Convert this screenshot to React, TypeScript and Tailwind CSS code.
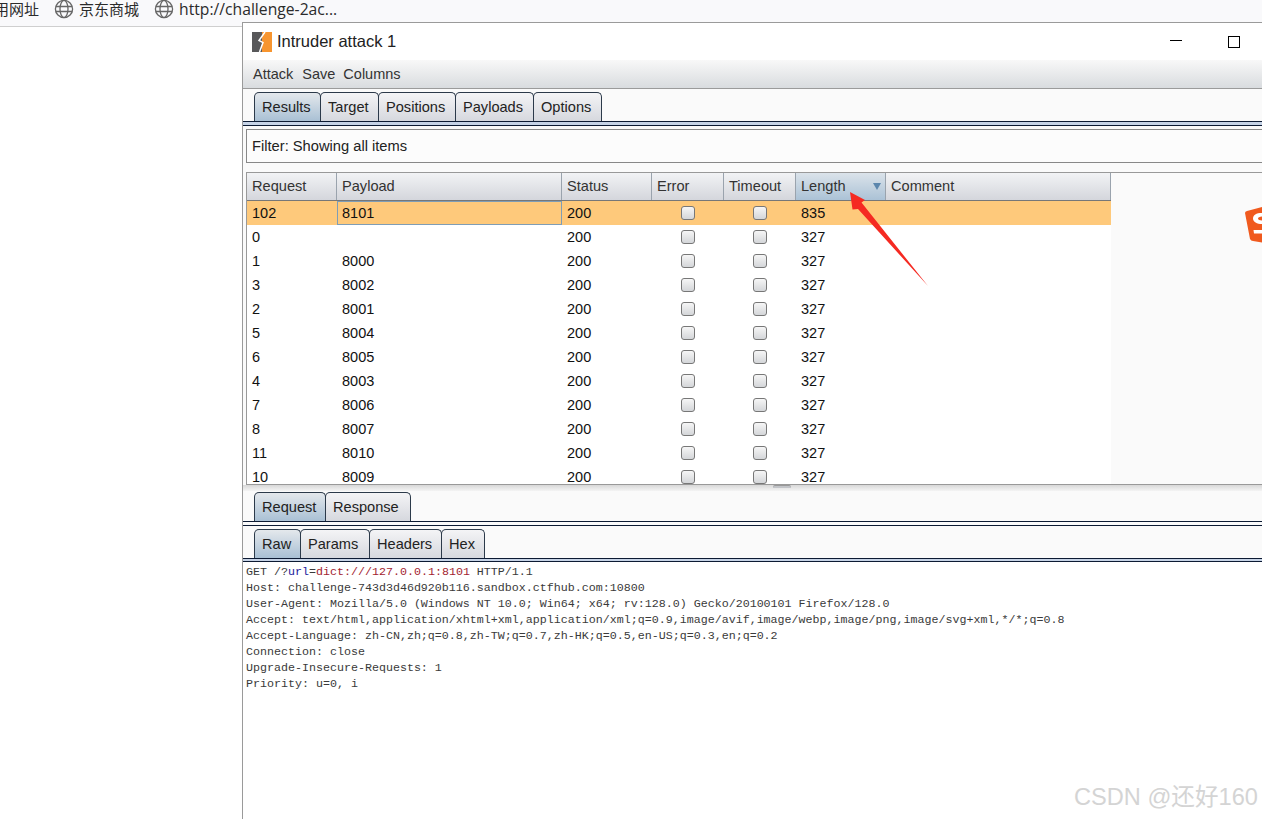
const sans = "font-['Liberation_Sans',Arial,sans-serif]";

const rows = [
  ["102", "8101", "835"],
  ["0", "", "327"],
  ["1", "8000", "327"],
  ["3", "8002", "327"],
  ["2", "8001", "327"],
  ["5", "8004", "327"],
  ["6", "8005", "327"],
  ["4", "8003", "327"],
  ["7", "8006", "327"],
  ["8", "8007", "327"],
  ["11", "8010", "327"],
  ["10", "8009", "327"],
];

const headers = [
  { label: "Request", w: "w-[90px]" },
  { label: "Payload", w: "w-[225px]" },
  { label: "Status", w: "w-[90px]" },
  { label: "Error", w: "w-[72px]" },
  { label: "Timeout", w: "w-[72px]" },
  { label: "Length", w: "w-[90px]" },
  { label: "Comment", w: "w-[225px]" },
];

function Globe() {
  return (
    <svg width="20" height="20" viewBox="0 0 20 20" fill="none" stroke="#666" strokeWidth="1.3" className="shrink-0">
      <circle cx="10" cy="10" r="8.6" />
      <ellipse cx="10" cy="10" rx="4" ry="8.6" />
      <path d="M1.6 7.5h16.8M1.6 12.5h16.8" />
    </svg>
  );
}

function Tab({ label, active, w }: { label: string; active?: boolean; w: string }) {
  return (
    <div
      className={`${w} h-full -mr-px flex items-center pl-[7px] pt-[2px] rounded-t-[5px] border border-b-0 border-[#2c3a4a] text-[14.6px] text-[#222] ${
        active ? "bg-gradient-to-b from-[#e4e8ec] to-[#a9c0d4]" : "bg-gradient-to-b from-[#f4f4f6] to-[#d6d8de]"
      }`}
    >
      {label}
    </div>
  );
}

function TabRow({ tabs, h }: { tabs: { label: string; w: string; active?: boolean }[]; h: string }) {
  return (
    <div className={`${h} flex pl-[11px]`}>
      {tabs.map((t) => (
        <Tab key={t.label} {...t} />
      ))}
    </div>
  );
}

function Check() {
  return (
    <div className="w-[14px] h-[14px] rounded-[3px] border border-[#777] bg-gradient-to-b from-[#f6f6f6] to-[#d4d6d9]" />
  );
}

function HttpRequest() {
  return (
    <pre className="font-['Liberation_Mono',monospace] text-[11.67px] leading-[16px] text-[#3a3a3a] pl-[3px] pt-[2px]">
      {"GET /?"}
      <span className="text-[#1c1c9c]">url</span>
      {"="}
      <span className="text-[#a3232f]">dict:///127.0.0.1:8101</span>
      {" HTTP/1.1\n"}
      {"Host: challenge-743d3d46d920b116.sandbox.ctfhub.com:10800\n"}
      {"User-Agent: Mozilla/5.0 (Windows NT 10.0; Win64; x64; rv:128.0) Gecko/20100101 Firefox/128.0\n"}
      {"Accept: text/html,application/xhtml+xml,application/xml;q=0.9,image/avif,image/webp,image/png,image/svg+xml,*/*;q=0.8\n"}
      {"Accept-Language: zh-CN,zh;q=0.8,zh-TW;q=0.7,zh-HK;q=0.5,en-US;q=0.3,en;q=0.2\n"}
      {"Connection: close\n"}
      {"Upgrade-Insecure-Requests: 1\n"}
      {"Priority: u=0, i"}
    </pre>
  );
}

export default function App() {
  return (
    <div className={`relative w-[1262px] h-[819px] overflow-hidden bg-white ${sans}`}>
      {/* browser bookmarks bar */}
      <div className="h-[27px] bg-[#f9f9fb] border-b border-[#cfcfcf] flex items-center pb-[8px] text-[#2b2b2b]">
        <span className="ml-[-6px] text-[15px] leading-[18px] font-['Noto_Sans_CJK_SC',sans-serif]">用网址</span>
        <div className="ml-[15px] flex items-center gap-[5px]">
          <Globe />
          <span className="text-[15px] leading-[18px] font-['Noto_Sans_CJK_SC',sans-serif]">京东商城</span>
        </div>
        <div className="ml-[15px] flex items-center gap-[5px]">
          <Globe />
          <span className="text-[15.7px] leading-[18px] font-['Open_Sans',sans-serif]">http://challenge-2ac...</span>
        </div>
      </div>

      {/* intruder window */}
      <div className="absolute left-[242px] top-[22px] w-[1020px] h-[797px] bg-[#fafafa] border-l border-t border-[#9a9a9a] flex flex-col">
        <div className="h-[37px] shrink-0 bg-white flex items-center pl-[9px] relative">
          <svg width="20" height="20" viewBox="0 0 20 20" className="shrink-0">
            <rect width="10" height="20" fill="#58585a" />
            <rect x="10" width="10" height="20" fill="#f7952f" />
            <path d="M13 0L7 8.500l4 2L7.500 20" fill="none" stroke="#fff" strokeWidth="1.500" />
          </svg>
          <span className="ml-[5px] text-[16.5px] text-[#222]">Intruder attack 1</span>
          <div className="absolute left-[927px] top-[17px] w-[12px] h-px bg-black" />
          <div className="absolute left-[985px] top-[13px] w-[12px] h-[12px] border border-black" />
        </div>

        <div className="h-[29px] shrink-0 bg-gradient-to-b from-[#f8f8f8] to-[#d9dcdf] border-b border-[#9b9b9b] flex items-center gap-[8px] pl-[10px] pt-[1px] text-[14.5px] text-[#333]">
          <span>Attack</span>
          <span className="ml-px">Save</span>
          <span>Columns</span>
        </div>

        <div className="pt-[3px] shrink-0">
          <TabRow
            h="h-[29px]"
            tabs={[
              { label: "Results", w: "w-[67px]", active: true },
              { label: "Target", w: "w-[59px]" },
              { label: "Positions", w: "w-[78px]" },
              { label: "Payloads", w: "w-[79px]" },
              { label: "Options", w: "w-[69px]" },
            ]}
          />
          <div className="h-[5px] bg-[#c6d3e6] border-y border-[#0c1a33]" />
        </div>

        <div className="mt-[3px] ml-[3px] h-[34px] shrink-0 bg-[#fcfcfc] border-y border-l border-[#888] flex items-center pl-[5px] pt-[1px] text-[14.7px] text-[#222]">
          Filter: Showing all items
        </div>

        <div className="mt-[9px] ml-[3px] h-[313px] shrink-0 border-t border-l border-b border-[#999] overflow-hidden flex">
          <div className="w-[864px] shrink-0 bg-white">
            <div className="flex h-[28px] border-b border-[#777]">
              {headers.map((h) => (
                <div
                  key={h.label}
                  className={`${h.w} relative flex items-center pl-[5px] border-r border-[#9aa3ad] text-[14.6px] text-[#333] ${
                    h.label === "Length"
                      ? "bg-gradient-to-b from-[#dbe3ea] to-[#abc2d6]"
                      : "bg-gradient-to-b from-[#f2f3f5] to-[#d4d6dc]"
                  }`}
                >
                  {h.label}
                  {h.label === "Length" && (
                    <span className="absolute right-[4px] top-[10px] w-0 h-0 border-x-[4px] border-t-[7px] border-x-transparent border-t-[#5b86ad]" />
                  )}
                </div>
              ))}
            </div>
            {rows.map((r, i) => (
              <div key={r[0]} className={`flex h-[24px] items-center text-[14.5px] text-[#111] ${i === 0 ? "bg-[#fec97b]" : ""}`}>
                <div className="w-[90px] pl-[5px] pt-[2px]">{r[0]}</div>
                <div className={`w-[225px] h-full flex items-center pt-[2px] ${i === 0 ? "border border-[#7f9db5] pl-[4px]" : "pl-[5px]"}`}>{r[1]}</div>
                <div className="w-[90px] pl-[5px] pt-[2px]">200</div>
                <div className="w-[72px] flex justify-center">
                  <Check />
                </div>
                <div className="w-[72px] flex justify-center">
                  <Check />
                </div>
                <div className="w-[90px] pl-[5px] pt-[2px]">{r[2]}</div>
              </div>
            ))}
          </div>
        </div>

        {/* splitter */}
        <div className="h-[6px] shrink-0 bg-gradient-to-b from-[#d8d8d8] to-[#f4f4f4] flex justify-center">
          <div className="ml-[58px] w-[18px] h-[3px] bg-[#c2c4c8] rounded-t-[2px] border-t border-[#999]" />
        </div>

        <div className="pt-[1px] shrink-0">
          <TabRow
            h="h-[29px]"
            tabs={[
              { label: "Request", w: "w-[72px]", active: true },
              { label: "Response", w: "w-[86px]" },
            ]}
          />
          <div className="h-[5px] bg-[#fafafa] border-y border-[#0c1a33]" />
        </div>

        <div className="pt-[3px] shrink-0">
          <TabRow
            h="h-[29px]"
            tabs={[
              { label: "Raw", w: "w-[47px]", active: true },
              { label: "Params", w: "w-[70px]" },
              { label: "Headers", w: "w-[73px]" },
              { label: "Hex", w: "w-[44px]" },
            ]}
          />
          <div className="h-[4px] bg-[#c6d3e6] border-y border-[#0c1a33]" />
        </div>

        <div className="flex-1 bg-white">
          <HttpRequest />
        </div>
      </div>

      {/* logo cut off by the right edge */}
      <svg width="18" height="36" viewBox="0 0 18 36" className="absolute left-[1244px] top-[207px]">
        <path d="M3 4L18 0v35.500L9 34q-2 0-3-2L1 6q0-1.500 2-2z" fill="#f05a1e" />
        <path d="M18 6c-6 0-9 2-9 5.500S13 17 18 17v-3.500c-2.500 0-4-1-4-2s1.500-2 4-2zM18 23H9.500l.5 3.500h8z" fill="#fff" />
      </svg>

      {/* red annotation arrow */}
      <svg width="100" height="110" viewBox="0 0 100 110" className="absolute left-[840px] top-[185px]">
        <path d="M10 7l15 8-3.500 2.500L88 101 18 24l-5.500 .5z" fill="#f52a22" />
      </svg>

      {/* watermark */}
      <div className="absolute left-[1074px] top-[781px] text-[23.6px] leading-[32px] text-[#d4d4d4] font-['Liberation_Sans','Noto_Sans_CJK_SC',sans-serif] whitespace-nowrap">
        CSDN @还好160
      </div>
    </div>
  );
}
